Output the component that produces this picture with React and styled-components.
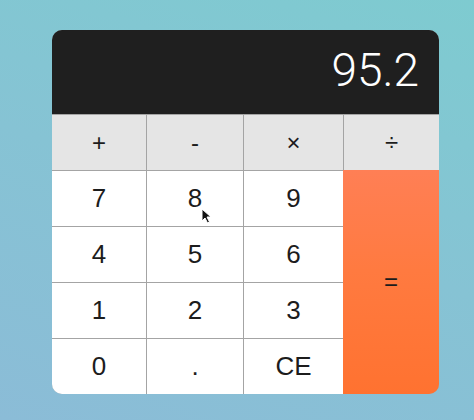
import React from 'react';
import styled, { createGlobalStyle } from 'styled-components';

const GlobalStyle = createGlobalStyle`
  html, body {
    margin: 0;
    padding: 0;
  }
  body {
    width: 474px;
    height: 420px;
    overflow: hidden;
    background: linear-gradient(20deg, #8bbcd7 0%, #86c3d4 50%, #7ecbd0 100%);
    font-family: "Liberation Sans", Arial, sans-serif;
  }
`;

const Page = styled.div`
  padding: 30px 0 0 52px;
`;

const Calculator = styled.div`
  position: relative;
  width: 387px;
  display: grid;
  grid-template-columns: 94px 96px 99px 95px;
  grid-template-rows: 84px repeat(5, 55px);
  gap: 1px;
  background: #a4a4a4;
  border-radius: 10px;
  overflow: hidden;
`;

const Display = styled.div`
  grid-column: 1 / 5;
  background: #1f1f1f;
  color: #fff;
  display: flex;
  align-items: center;
  justify-content: flex-end;
  padding: 0 20px 4px 0;
  font-family: Roboto, "Liberation Sans", sans-serif;
  font-weight: 300;
  font-size: 46px;
`;

const Key = styled.button`
  border: none;
  margin: 0;
  padding: 0;
  display: flex;
  align-items: center;
  justify-content: center;
  font-family: "Liberation Sans", Arial, sans-serif;
  font-size: ${p => (p.$op ? '24px' : '26px')};
  color: #1c1c1c;
  background: ${p => (p.$op ? '#e5e5e5' : '#ffffff')};
  cursor: pointer;
`;

const EqualsKey = styled(Key)`
  grid-column: 4;
  grid-row: 3 / 7;
  background: linear-gradient(180deg, #ff7f55 0%, #ff7a40 45%, #ff7230 100%);
  margin-left: -1px;
  margin-top: -1px;
  font-size: 24px;
`;

const Pointer = styled.svg`
  position: absolute;
  left: 149px;
  top: 178px;
  width: 11px;
  height: 16px;
  pointer-events: none;
`;

const ops = ['+', '-', '×', '÷'];
const rows = [
  ['7', '8', '9'],
  ['4', '5', '6'],
  ['1', '2', '3'],
  ['0', '.', 'CE'],
];

const App = () => {
  return (
    <Page>
      <GlobalStyle />
      <Calculator>
        <Display>95.2</Display>
        {ops.map(op => (
          <Key key={op} $op>
            {op}
          </Key>
        ))}
        {rows[0].map(k => (
          <Key key={k}>{k}</Key>
        ))}
        <EqualsKey>=</EqualsKey>
        {rows.slice(1).flat().map(k => (
          <Key key={k}>{k}</Key>
        ))}
        <Pointer viewBox="0 0 11 16">
          <path
            d="M1 1 L1 13 L4 10 L6.5 15 L8.5 14 L6 9 L10 9 Z"
            fill="#111"
            stroke="#fff"
            strokeWidth="1"
            strokeLinejoin="round"
          />
        </Pointer>
      </Calculator>
    </Page>
  );
};

export default App;
